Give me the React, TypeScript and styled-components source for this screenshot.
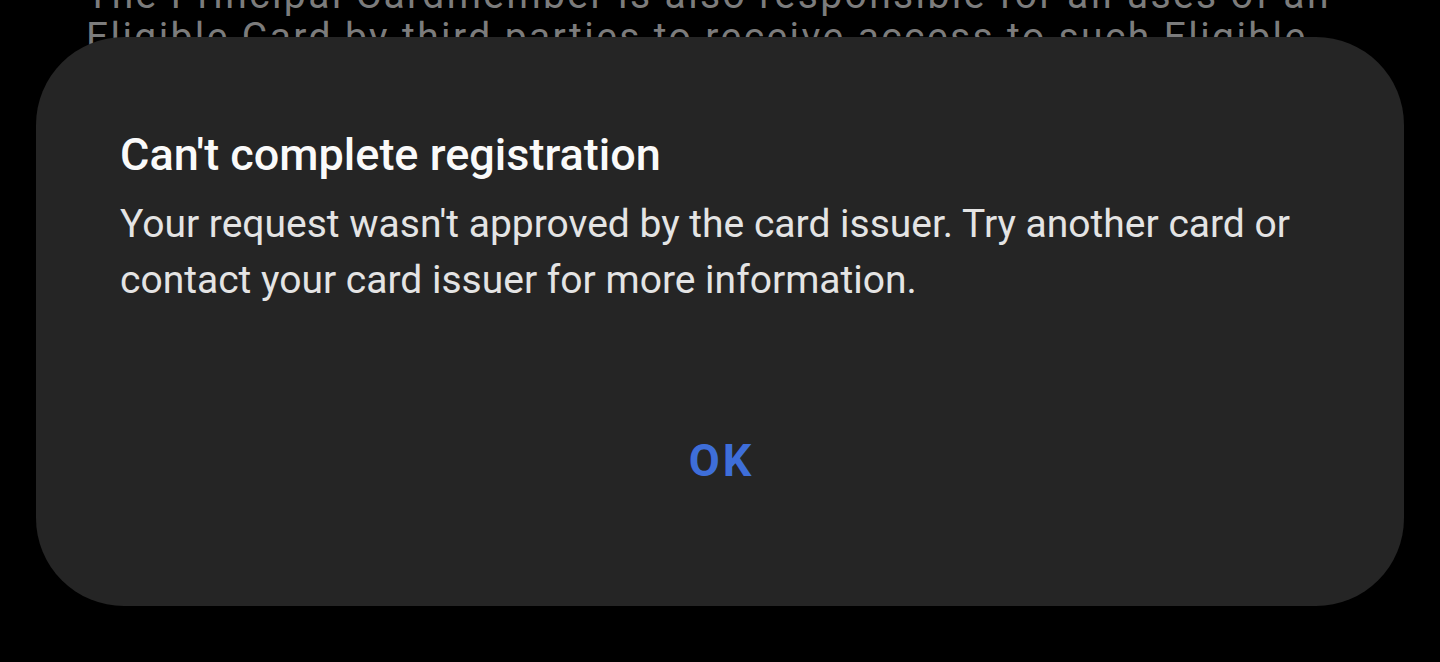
import React from "react";
import styled, { createGlobalStyle } from "styled-components";

const Global = createGlobalStyle`
  html, body {
    margin: 0;
    padding: 0;
    background: #000;
  }
  body {
    font-family: Roboto, "Noto Sans", "Liberation Sans", sans-serif;
  }
`;

const Screen = styled.div`
  position: relative;
  width: 1440px;
  height: 662px;
  overflow: hidden;
  background: #000;
`;

const BackgroundText = styled.p`
  margin: -26px 0 0 86px;
  font-size: 39px;
  line-height: 42px;
  letter-spacing: 2.4px;
  white-space: nowrap;
  color: #7c7c7c;
`;

const Dialog = styled.div`
  position: absolute;
  left: 36px;
  top: 37px;
  width: 1368px;
  height: 569px;
  box-sizing: border-box;
  padding: 91px 84px 0 84px;
  background: #252525;
  border-radius: 88px;
  display: flex;
  flex-direction: column;
`;

const Title = styled.h2`
  margin: 0;
  font-size: 45px;
  line-height: 54px;
  font-weight: 500;
  color: #fafafa;
`;

const Message = styled.p`
  margin: 14px 0 0 0;
  font-size: 39px;
  line-height: 56px;
  font-weight: 400;
  color: #e4e4e4;
`;

const Actions = styled.div`
  margin-top: 127px;
  display: flex;
  justify-content: center;
`;

const TextButton = styled.button`
  background: none;
  border: none;
  padding: 0 0 0 3px;
  font-family: inherit;
  font-size: 45px;
  line-height: 52px;
  font-weight: 700;
  letter-spacing: 3px;
  color: #3e6ed9;
  cursor: pointer;
`;

export default function App() {
  return (
    <>
      <Global />
      <Screen>
        <BackgroundText>
          The Principal Cardmember is also responsible for all uses of an
          <br />
          Eligible Card by third parties to receive access to such Eligible
        </BackgroundText>
        <Dialog>
          <Title>Can't complete registration</Title>
          <Message>
            Your request wasn't approved by the card issuer. Try another card or
            <br />
            contact your card issuer for more information.
          </Message>
          <Actions>
            <TextButton>OK</TextButton>
          </Actions>
        </Dialog>
      </Screen>
    </>
  );
}
